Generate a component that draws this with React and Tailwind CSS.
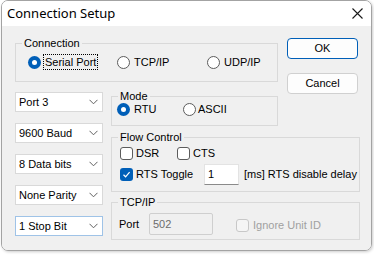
import { useState } from 'react';

function Group({ label, className, children }) {
  return (
    <div className={`relative border border-[#d9d9d9] ${className}`}>
      <span className="absolute left-[6px] top-[-8px] bg-[#f0f0f0] px-[2px] leading-[14px]">
        {label}
      </span>
      {children}
    </div>
  );
}

function Radio({ checked }) {
  return checked ? (
    <span className="flex h-[13px] w-[13px] shrink-0 items-center justify-center rounded-full bg-[#005fb8]">
      <span className="h-[5px] w-[5px] rounded-full bg-white" />
    </span>
  ) : (
    <span className="h-[13px] w-[13px] shrink-0 rounded-full border border-[#5c5c5c] bg-white" />
  );
}

function Check({ checked, disabled }) {
  if (checked) {
    return (
      <span className="flex h-[13px] w-[13px] shrink-0 items-center justify-center rounded-[3px] bg-[#005fb8]">
        <svg width="9" height="9" viewBox="0 0 9 9">
          <path d="M1.5 4.8 L3.6 6.8 L7.6 2.2" fill="none" stroke="white" strokeWidth="1.2" />
        </svg>
      </span>
    );
  }
  return (
    <span
      className={
        disabled
          ? 'h-[13px] w-[13px] shrink-0 rounded-[3px] border border-[#c8c8c8] bg-[#f5f5f5]'
          : 'h-[13px] w-[13px] shrink-0 rounded-[3px] border border-[#5c5c5c] bg-white'
      }
    />
  );
}

function Combo({ value, focused }) {
  return (
    <div
      className={`flex h-[20px] w-[88px] items-center justify-between border bg-white pl-[3px] pr-[4px] ${
        focused ? 'border-[#9fc3e7]' : 'border-[#d9d9d9]'
      }`}
    >
      <span>{value}</span>
      <svg width="9" height="6" viewBox="0 0 9 6">
        <path d="M0.5 0.8 L4.5 4.8 L8.5 0.8" fill="none" stroke="#606060" strokeWidth="1" />
      </svg>
    </div>
  );
}

export default function App() {
  const [mode] = useState('RTU');

  return (
    <div className="h-[255px] w-[374px] whitespace-nowrap bg-white pl-[1px] font-['Liberation_Sans',Arial,sans-serif] text-[11px] text-black">

      <div className="flex h-[251px] w-[371px] flex-col overflow-hidden rounded-[7px] border border-[#a3a3a3] shadow-[1px_1px_3px_rgba(0,0,0,0.2)]">

        {/* TITLE BAR */}

        <div className="flex h-[25px] shrink-0 items-center bg-white pl-[5px] pr-[8px]">
          <span className="font-['Noto_Sans',sans-serif] text-[13px]">Connection Setup</span>
          <svg className="ml-auto" width="11" height="11" viewBox="0 0 11 11">
            <path d="M0.5 0.5 L10.5 10.5 M10.5 0.5 L0.5 10.5" stroke="#1a1a1a" strokeWidth="1.1" />
          </svg>
        </div>

        {/* CLIENT */}

        <div className="flex-1 bg-[#f0f0f0] pl-[13px] pt-[12px]">

          <div className="grid grid-cols-[88px_8px_167px_82px] items-start">

            {/* CONNECTION */}

            <Group label="Connection" className="col-span-3 mt-[5px] h-[39px] w-[263px]">
              <div className="mt-[10px] flex h-[16px] items-center pl-[12px]">
                <div className="flex w-[89px] items-center gap-[2px]">
                  <Radio checked />
                  <span className="border border-dotted border-black px-[1px] leading-[14px]">
                    Serial Port
                  </span>
                </div>
                <div className="flex w-[90px] items-center gap-[4px]">
                  <Radio />
                  <span>TCP/IP</span>
                </div>
                <div className="flex items-center gap-[4px]">
                  <Radio />
                  <span>UDP/IP</span>
                </div>
              </div>
            </Group>

            {/* BUTTONS */}

            <div className="col-start-4 row-span-2 flex flex-col gap-[14px] pl-[9px]">
              <button className="h-[21px] w-[71px] rounded-[4px] border border-[#005fb8] bg-[#fdfdfd]">
                OK
              </button>
              <button className="h-[21px] w-[71px] rounded-[4px] border border-[#d0d0d0] bg-[#fdfdfd]">
                Cancel
              </button>
            </div>

            {/* PORT SETTINGS */}

            <div className="col-start-1 row-span-3 row-start-2 mt-[10px] flex flex-col gap-[11px]">
              <Combo value="Port 3" />
              <Combo value="9600 Baud" />
              <Combo value="8 Data bits" />
              <Combo value="None Parity" />
              <Combo value="1 Stop Bit" focused />
            </div>

            {/* MODE */}

            <Group label="Mode" className="col-start-3 row-start-2 mt-[14px] h-[30px]">
              <div className="mt-[4px] flex h-[16px] items-center pl-[5px]">
                <div className="flex w-[66px] items-center gap-[4px]">
                  <Radio checked={mode === 'RTU'} />
                  <span>RTU</span>
                </div>
                <div className="flex items-center gap-[2px]">
                  <Radio checked={mode === 'ASCII'} />
                  <span>ASCII</span>
                </div>
              </div>
            </Group>

            {/* FLOW CONTROL */}

            <Group label="Flow Control" className="col-span-2 col-start-3 row-start-3 mt-[11px] h-[55px]">
              <div className="flex flex-col gap-[3px] pl-[8px] pt-[7px]">
                <div className="flex h-[16px] items-center">
                  <div className="flex w-[57px] items-center gap-[3px]">
                    <Check />
                    <span>DSR</span>
                  </div>
                  <div className="flex items-center gap-[3px]">
                    <Check />
                    <span>CTS</span>
                  </div>
                </div>
                <div className="flex h-[21px] items-center">
                  <div className="flex w-[84px] items-center gap-[3px]">
                    <Check checked />
                    <span>RTS Toggle</span>
                  </div>
                  <div className="flex h-[21px] w-[35px] items-center border border-[#e3e3e3] border-b-[#8a8a8a] bg-white pl-[3px]">
                    1
                  </div>
                  <span className="ml-[5px]">[ms] RTS disable delay</span>
                </div>
              </div>
            </Group>

            {/* TCP/IP */}

            <Group label="TCP/IP" className="col-span-2 col-start-3 row-start-4 mt-[10px] h-[38px]">
              <div className="flex items-center pl-[7px] pt-[10px]">
                <span className="w-[30px]">Port</span>
                <div className="flex h-[22px] w-[64px] items-center rounded-[2px] border border-[#cfcfcf] bg-[#f0f0f0] pl-[3px] text-[#6d6d6d]">
                  502
                </div>
                <div className="ml-[23px] mt-[2px] flex items-center gap-[4px] text-[#a0a0a0]">
                  <Check disabled />
                  <span>Ignore Unit ID</span>
                </div>
              </div>
            </Group>

          </div>

        </div>

      </div>

    </div>
  );
}
